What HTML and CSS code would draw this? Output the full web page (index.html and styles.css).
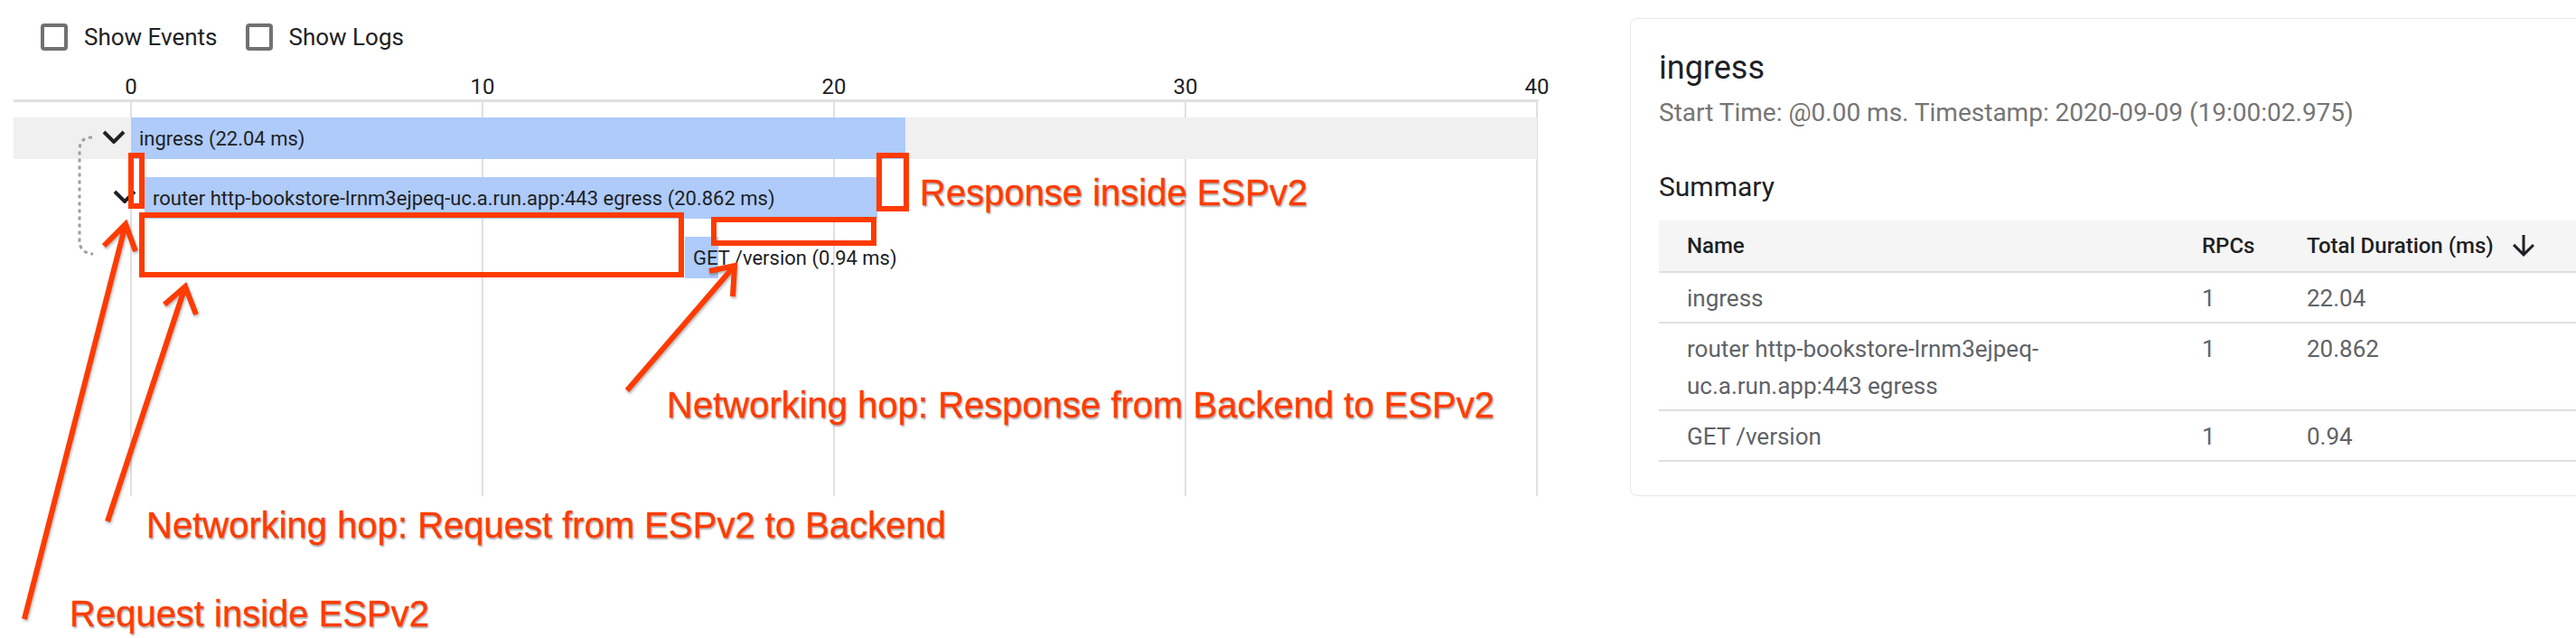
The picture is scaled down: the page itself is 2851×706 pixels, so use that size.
FILE: index.html
```html
<!DOCTYPE html>
<html>
<head>
<meta charset="utf-8">
<link rel="stylesheet" href="styles.css">
</head>
<body>
<div class="page">
  <section class="trace">
    <div class="toolbar">
      <label class="check"><span class="box"></span><span>Show Events</span></label>
      <label class="check"><span class="box"></span><span>Show Logs</span></label>
    </div>
    <div class="ticks">
      <div></div>
      <div class="tick"><span>0</span></div>
      <div class="tick"><span>10</span></div>
      <div class="tick"><span>20</span></div>
      <div class="tick"><span>30</span></div>
      <div class="tick"><span>40</span></div>
    </div>
    <div class="rows">
      <svg class="connector" width="40" height="140" viewBox="60 30 40 140">
        <path d="M87 39 Q73 39 73 53 L73 153 Q73 167 88 168"/>
      </svg>
      <div class="row selected">
        <div class="row-label depth0">
          <svg class="chev" width="26" height="15" viewBox="0 0 26 15"><polyline points="2,2 13,13 24,2"/></svg>
        </div>
        <div class="track">
          <div class="bar" style="margin-left:0px;width:857px">ingress (22.04 ms)</div>
        </div>
      </div>
      <div class="row">
        <div class="row-label depth1">
          <svg class="chev" width="26" height="15" viewBox="0 0 26 15"><polyline points="2,2 13,13 24,2"/></svg>
        </div>
        <div class="track">
          <div class="bar" style="margin-left:15px;width:811px">router http-bookstore-lrnm3ejpeq-uc.a.run.app:443 egress (20.862 ms)</div>
        </div>
      </div>
      <div class="row">
        <div class="row-label depth2"></div>
        <div class="track">
          <div class="bar" style="margin-left:613px;width:37px">GET /version (0.94 ms)</div>
        </div>
      </div>
    </div>
  </section>

  <aside class="details">
    <h1 class="title">ingress</h1>
    <p class="subtitle">Start Time: @0.00 ms. Timestamp: 2020-09-09 (19:00:02.975)</p>
    <h2 class="summary">Summary</h2>
    <div class="table">
      <div class="tr head">
        <div class="td name">Name</div>
        <div class="td">RPCs</div>
        <div class="td dur">Total Duration (ms)
          <svg class="sort" width="36" height="36" viewBox="0 0 24 24"><path d="M20 12l-1.41-1.41L13 16.17V4h-2v12.17l-5.58-5.59L4 12l8 8 8-8z"/></svg>
        </div>
      </div>
      <div class="tr">
        <div class="td name">ingress</div>
        <div class="td">1</div>
        <div class="td">22.04</div>
      </div>
      <div class="tr">
        <div class="td name">router http-bookstore-lrnm3ejpeq-uc.a.run.app:443 egress</div>
        <div class="td">1</div>
        <div class="td">20.862</div>
      </div>
      <div class="tr">
        <div class="td name">GET /version</div>
        <div class="td">1</div>
        <div class="td">0.94</div>
      </div>
    </div>
  </aside>

  <div class="annotations">
    <div class="mark" style="left:142px;top:169px;width:18px;height:62px"></div>
    <div class="mark" style="left:970px;top:169px;width:36px;height:65px"></div>
    <div class="mark" style="left:154px;top:235px;width:603px;height:72px"></div>
    <div class="mark" style="left:787px;top:240px;width:183px;height:32px"></div>
    <svg class="arrows" width="2851" height="706" viewBox="0 0 2851 706">
      <path d="M27 685 L139 248 M115 272 L139 248 L150 278"/>
      <path d="M119 577 L205 317 M182 337 L205 317 L217 348"/>
      <path d="M694 432 L813 294 M785 300 L813 294 L811 328"/>
    </svg>
    <div class="note" style="left:1018px;top:190px">Response inside ESPv2</div>
    <div class="note" style="left:738px;top:425px">Networking hop: Response from Backend to ESPv2</div>
    <div class="note" style="left:162px;top:558px">Networking hop: Request from ESPv2 to Backend</div>
    <div class="note" style="left:77px;top:656px">Request inside ESPv2</div>
  </div>
</div>
</body>
</html>
```

FILE: styles.css
```css
html, body {
  margin: 0;
  padding: 0;
  background: #ffffff;
}
body {
  width: 2851px;
  height: 706px;
  overflow: hidden;
  font-family: Roboto, "Noto Sans", Arial, sans-serif;
  color: #202124;
}
.page {
  position: relative;
  display: flex;
  align-items: flex-start;
  width: 2851px;
  height: 706px;
}

/* ---------- trace (left) ---------- */
.trace {
  flex: none;
  width: 1688px;
  padding-left: 15px;
}
.toolbar {
  display: flex;
  align-items: center;
  height: 30px;
  margin-top: 26px;
  padding-left: 30px;
  gap: 31px;
  font-size: 26px;
}
.check {
  display: flex;
  align-items: center;
  gap: 18px;
}
.check .box {
  width: 30px;
  height: 30px;
  box-sizing: border-box;
  border: 4px solid #717171;
  border-radius: 4px;
  background: #fff;
}
.ticks {
  display: grid;
  grid-template-columns: 130px repeat(4, 389px) 1fr;
  height: 28px;
  margin-top: 26px;
  font-size: 24px;
  line-height: 28px;
  color: #202124;
}
.tick span {
  display: inline-block;
  transform: translateX(-50%);
}
.rows {
  position: relative;
  height: 419px;
  padding-top: 17px;
  border-top: 3px solid #e0e0e0;
  background:
    linear-gradient(#e0e0e0, #e0e0e0) 129px 0 / 2px 100% no-repeat,
    linear-gradient(#e0e0e0, #e0e0e0) 518px 0 / 2px 100% no-repeat,
    linear-gradient(#e0e0e0, #e0e0e0) 907px 0 / 2px 100% no-repeat,
    linear-gradient(#e0e0e0, #e0e0e0) 1296px 0 / 2px 100% no-repeat,
    linear-gradient(#e0e0e0, #e0e0e0) 1685px 0 / 2px 100% no-repeat;
}
.connector {
  position: absolute;
  left: 60px;
  top: 30px;
  fill: none;
  stroke: #9e9e9e;
  stroke-width: 3;
  stroke-dasharray: 4 4;
}
.row {
  display: flex;
  align-items: center;
  height: 46px;
  margin-bottom: 20px;
}
.row.selected {
  background: #f0f0f0;
  margin-right: 2px;
}
.row-label {
  flex: none;
  width: 130px;
  box-sizing: border-box;
  display: flex;
  align-items: center;
  padding-bottom: 4px;
}
.depth0 { padding-left: 98px; }
.depth1 { padding-left: 110px; }
.chev {
  flex: none;
  fill: none;
  stroke: #202124;
  stroke-width: 4;
}
.track {
  flex: 1;
  display: flex;
  align-self: stretch;
}
.bar {
  flex: none;
  box-sizing: border-box;
  display: flex;
  align-items: center;
  padding-left: 9px;
  background: #aecbfa;
  white-space: nowrap;
  font-size: 22px;
  color: #202124;
}

/* ---------- details (right) ---------- */
.details {
  flex: none;
  width: 1100px;
  height: 494px;
  margin-left: 101px;
  margin-top: 20px;
  box-sizing: content-box;
  padding: 33px 0 0 31px;
  border: 1px solid #e8e8e8;
  border-radius: 8px;
  box-shadow: 0 0 2px rgba(0,0,0,0.04);
}
.title {
  margin: 0;
  font-size: 36px;
  line-height: 42px;
  font-weight: 400;
  color: #202124;
}
.subtitle {
  margin: 12px 0 0;
  font-size: 28px;
  line-height: 33px;
  color: #757575;
}
.summary {
  margin: 48px 0 0;
  font-size: 30px;
  line-height: 35px;
  font-weight: 400;
  color: #202124;
}
.table {
  margin-top: 20px;
}
.tr {
  display: grid;
  grid-template-columns: 601px 116px 1fr;
  border-bottom: 2px solid #e0e0e0;
  font-size: 26px;
  line-height: 41px;
  color: #5f6368;
}
.tr .td {
  padding: 8px 0 5px;
}
.tr .name {
  padding-left: 31px;
  padding-right: 24px;
}
.tr.head {
  height: 56px;
  align-items: center;
  background: #f5f5f5;
  font-size: 24px;
  font-weight: 500;
  color: #202124;
}
.tr.head .td {
  padding-top: 0;
  padding-bottom: 0;
}
.dur {
  display: flex;
  align-items: center;
  gap: 15px;
}
.sort {
  fill: #202124;
}

/* ---------- annotations (overlay) ---------- */
.annotations {
  position: absolute;
  left: 0;
  top: 0;
  width: 2851px;
  height: 706px;
  pointer-events: none;
}
.mark {
  position: absolute;
  box-sizing: border-box;
  border: 6px solid #ff3b00;
}
.arrows {
  position: absolute;
  left: 0;
  top: 0;
  fill: none;
  stroke: #ff3b00;
  stroke-width: 6;
  filter: drop-shadow(1px 2px 1.5px rgba(0,0,0,0.3));
}
.note {
  position: absolute;
  white-space: nowrap;
  font-family: "Liberation Sans", Arial, sans-serif;
  font-size: 40px;
  line-height: 46px;
  color: #ff3b00;
  -webkit-text-stroke: 0.4px #ff3b00;
  text-shadow: 1px 2px 2px rgba(0,0,0,0.35);
}
```
